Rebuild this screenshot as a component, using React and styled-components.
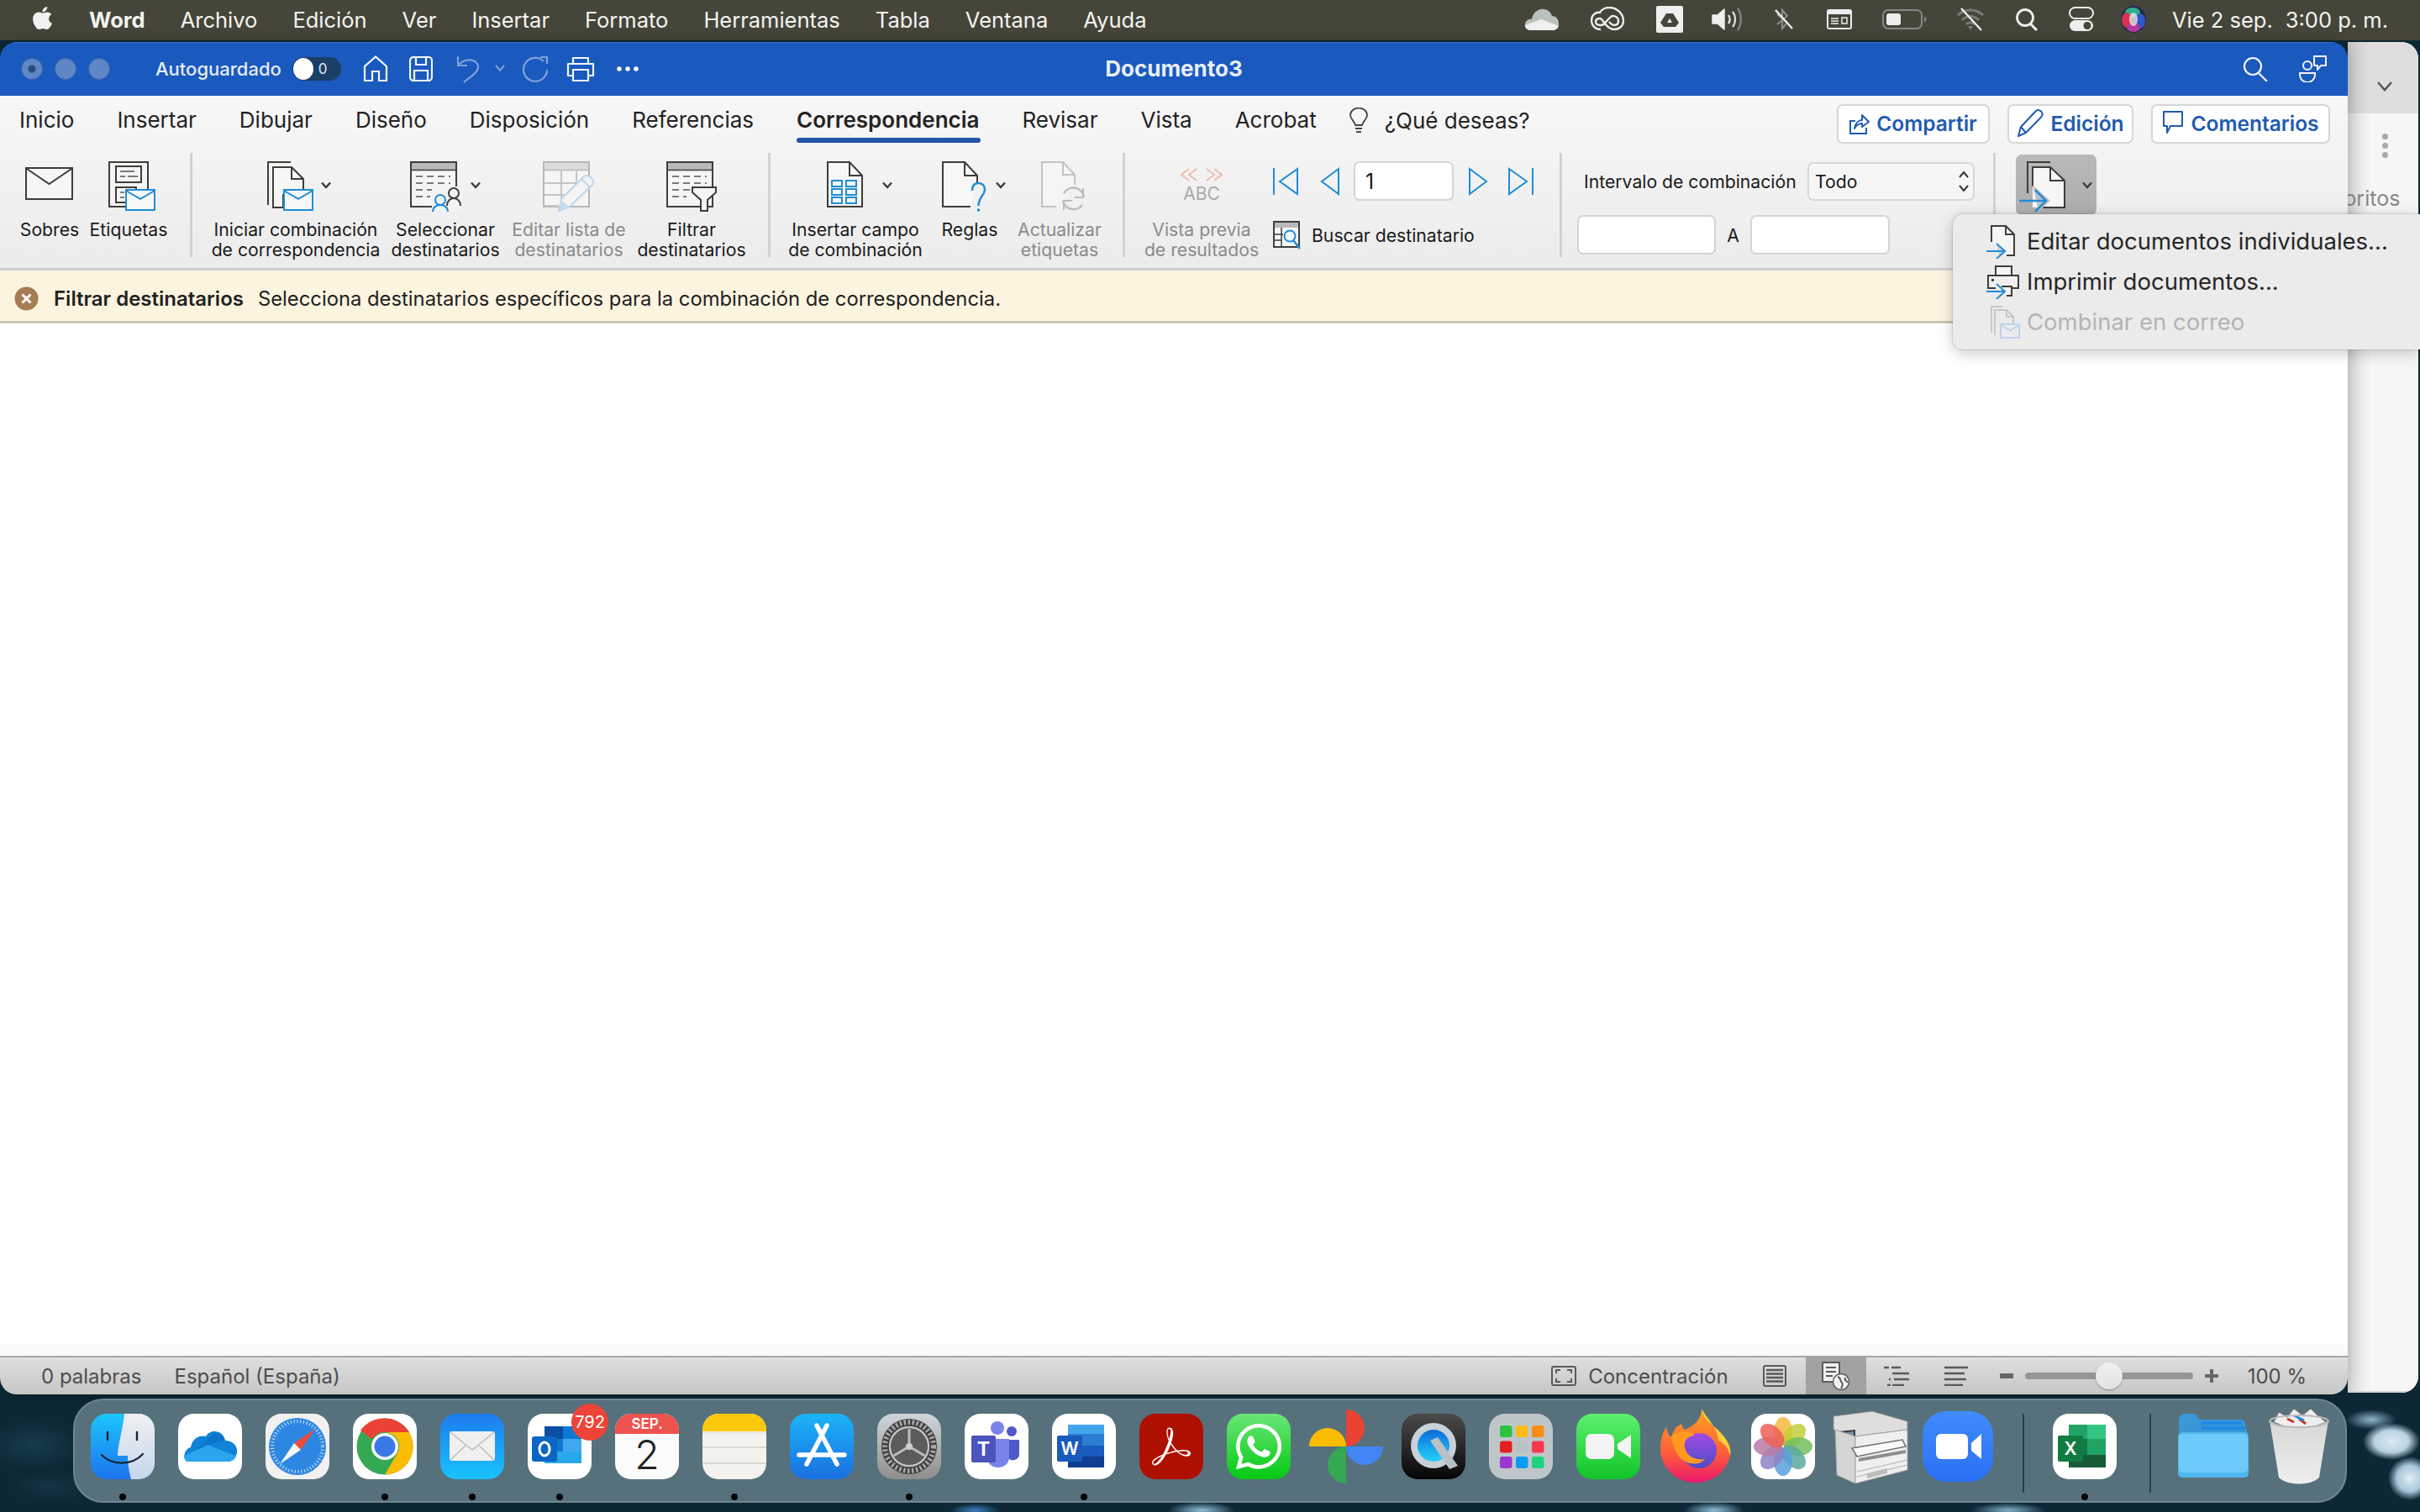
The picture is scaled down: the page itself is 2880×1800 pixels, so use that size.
import styled, { createGlobalStyle } from 'styled-components';
import { FaApple, FaWhatsapp } from 'react-icons/fa';
import { SiAdobeacrobatreader } from 'react-icons/si';

const DARK = '#3f3d38';
const BLUE = '#1f8dd6';
const GREY = '#b9b9b9';

const MENUS = ['Archivo', 'Edición', 'Ver', 'Insertar', 'Formato', 'Herramientas', 'Tabla', 'Ventana', 'Ayuda'];
const TABS = ['Inicio', 'Insertar', 'Dibujar', 'Diseño', 'Disposición', 'Referencias', 'Correspondencia', 'Revisar', 'Vista', 'Acrobat'];

export default function App() {
  return (
    <Stage>
      <GlobalStyle />
      <MenuBar>
        <AppleSlot><FaApple size={31} color="#f2f2f2" /></AppleSlot>
        <AppName>Word</AppName>
        {MENUS.map(m => <MenuItem key={m}>{m}</MenuItem>)}
        <StatusIcons>
          <Slot $w={78}><CloudStatus /></Slot>
          <Slot $w={78}><CreativeCloud /></Slot>
          <Slot $w={70}><DriveBox /></Slot>
          <Slot $w={66}><Speaker /></Slot>
          <Slot $w={70}><Bluetooth /></Slot>
          <Slot $w={62}><KeyViewer /></Slot>
          <Slot $w={94}><Battery /></Slot>
          <Slot $w={62}><Wifi /></Slot>
          <Slot $w={72}><MenuSearch /></Slot>
          <Slot $w={58}><ControlCenter /></Slot>
          <Slot $w={66}><Siri /></Slot>
          <Clock>Vie 2 sep.</Clock>
          <Clock $ml={15}>3:00 p. m.</Clock>
        </StatusIcons>
      </MenuBar>

      <Desktop>
        <WordWindow>
          <TitleBar>
            <TitleLeft>
              <Lights>
                <Light $dot />
                <Light />
                <Light />
              </Lights>
              <AutoSave>Autoguardado</AutoSave>
              <Toggle><Knob /><ToggleText>0</ToggleText></Toggle>
              <QuickIcons />
            </TitleLeft>
            <DocTitle>Documento3</DocTitle>
            <TitleRight>
              <TitleSearch />
              <PeopleChat />
            </TitleRight>
          </TitleBar>

          <TabRow>
            <Tabs>
              {TABS.map(t => <Tab key={t} $active={t === 'Correspondencia'}>{t}</Tab>)}
              <Bulb />
              <Ask>¿Qué deseas?</Ask>
            </Tabs>
            <TabActions>
              <ActionButton $w={182}><ShareGlyph />Compartir</ActionButton>
              <ActionButton $w={150}><PencilGlyph />Edición</ActionButton>
              <ActionButton $w={213}><CommentGlyph />Comentarios</ActionButton>
            </TabActions>
          </TabRow>

          <Ribbon>
            <Group $w={229} $pl={20}>
              <Item $w={78} label={['Sobres']}><SobresIcon /></Item>
              <Item $w={110} $pad={8} label={['Etiquetas']}><EtiquetasIcon /></Item>
            </Group>
            <Group $w={688} $pl={18}>
              <Item $w={210} $pad={7} label={['Iniciar combinación', 'de correspondencia']}><IniciarIcon /><Caret $ml={9} /></Item>
              <Item $w={146} label={['Seleccionar', 'destinatarios']}><SeleccionarIcon /><Caret $ml={10} /></Item>
              <Item $w={148} $off label={['Editar lista de', 'destinatarios']}><EditarIcon /></Item>
              <Item $w={144} label={['Filtrar', 'destinatarios']}><FiltrarIcon /></Item>
            </Group>
            <Group $w={422} $pl={11}>
              <Item $w={180} $pad={10} label={['Insertar campo', 'de combinación']}><InsertarIcon /><Caret $ml={22} /></Item>
              <Item $w={92} $pad={10} label={['Reglas']}><ReglasIcon /><Caret $ml={10} /></Item>
              <Item $w={122} $pad={10} $off label={['Actualizar', 'etiquetas']}><ActualizarIcon /></Item>
            </Group>
            <Group $w={520} $pl={16}>
              <Item $w={150} $off label={['Vista previa', 'de resultados']}>
                <PreviewStack>
                  <PreviewArrows />
                  <PreviewAbc>ABC</PreviewAbc>
                </PreviewStack>
              </Item>
              <NavBlock>
                <NavRow>
                  <NavArrow kind="first" />
                  <NavArrow kind="prev" />
                  <RecordInput readOnly value="1" />
                  <NavArrow kind="next" />
                  <NavArrow kind="last" />
                </NavRow>
                <FindRow>
                  <FindIcon />
                  <FindLabel>Buscar destinatario</FindLabel>
                </FindRow>
              </NavBlock>
            </Group>
            <Group $w={516} $pl={18}>
              <RangeBlock>
                <RangeRow>
                  <RangeLabel>Intervalo de combinación</RangeLabel>
                  <RangeSelect>
                    Todo
                    <UpDown />
                  </RangeSelect>
                </RangeRow>
                <RangeRow>
                  <RangeInput readOnly value="" $w={165} />
                  <RangeTo>A</RangeTo>
                  <RangeInput readOnly value="" $w={166} />
                </RangeRow>
              </RangeBlock>
            </Group>
            <MergeButton>
              <MergeIcon />
              <Caret $ml={20} />
            </MergeButton>
          </Ribbon>

          <Notice>
            <NoticeIcon />
            <NoticeTitle>Filtrar destinatarios</NoticeTitle>
            <NoticeText>Selecciona destinatarios específicos para la combinación de correspondencia.</NoticeText>
          </Notice>

          <Page />

          <StatusBar>
            <StatusText>0 palabras</StatusText>
            <StatusText $ml={39}>Español (España)</StatusText>
            <StatusRight>
              <FocusIcon />
              <StatusText $ml={14}>Concentración</StatusText>
              <ViewLines $ml={41} kind="print" />
              <WebCell><WebIcon /></WebCell>
              <ViewLines $ml={21} kind="outline" />
              <ViewLines $ml={42} kind="draft" />
              <ZoomSign $ml={38}>
                <svg width="16" height="6"><rect width="16" height="6" fill="#666" /></svg>
              </ZoomSign>
              <Slider><SliderKnob /></Slider>
              <ZoomSign $ml={14}>
                <svg width="16" height="16"><path d="M0 8H16M8 0V16" stroke="#666" strokeWidth="4" /></svg>
              </ZoomSign>
              <StatusText $ml={35}>100 %</StatusText>
            </StatusRight>
          </StatusBar>
        </WordWindow>

        <SideWindow>
          <SideTop><SideChevron /></SideTop>
          <SideBody>
            <SideDots><i /><i /><i /></SideDots>
            <SideLabel>Favoritos</SideLabel>
          </SideBody>
        </SideWindow>
      </Desktop>

      <Dock>
        <DockSlot $on><Finder /></DockSlot>
        <DockSlot><OneDrive /></DockSlot>
        <DockSlot><Safari /></DockSlot>
        <DockSlot $on><Chrome /></DockSlot>
        <DockSlot $on><Mail /></DockSlot>
        <DockSlot $on><Outlook /><Badge>792</Badge></DockSlot>
        <DockSlot><Calendar /></DockSlot>
        <DockSlot $on><Notes /></DockSlot>
        <DockSlot><AppStore /></DockSlot>
        <DockSlot $on><SystemPrefs /></DockSlot>
        <DockSlot><Teams /></DockSlot>
        <DockSlot $on><WordApp /></DockSlot>
        <DockSlot><Acrobat /></DockSlot>
        <DockSlot><WhatsApp /></DockSlot>
        <DockSlot><GooglePhotos /></DockSlot>
        <DockSlot><QuickTime /></DockSlot>
        <DockSlot><Launchpad /></DockSlot>
        <DockSlot><FaceTime /></DockSlot>
        <DockSlot><Firefox /></DockSlot>
        <DockSlot><Photos /></DockSlot>
        <DockSlot><Printer /></DockSlot>
        <DockSlot><ZoomApp /></DockSlot>
        <DockSep $l={25} $r={20} />
        <DockSlot $on><ExcelApp /></DockSlot>
        <DockSep $l={25} $r={22} />
        <DockSlot><FolderStack /></DockSlot>
        <DockSlot $ml={-2}><Trash /></DockSlot>
      </Dock>

      <Popup>
        <PopupRow><PopEditIcon /><span>Editar documentos individuales...</span></PopupRow>
        <PopupRow><PopPrintIcon /><span>Imprimir documentos...</span></PopupRow>
        <PopupRow $off><PopMailIcon /><span>Combinar en correo</span></PopupRow>
      </Popup>
    </Stage>
  );
}

function Item({ $w, $pad, $off, label, children }) {
  return (
    <RibbonItem $w={$w} $off={$off}>
      <IconSlot $pad={$pad}>{children}</IconSlot>
      {label.map(l => <span key={l}>{l}</span>)}
    </RibbonItem>
  );
}

function Caret({ $ml }) {
  return (
    <CaretSvg $ml={$ml} width="12" height="9" viewBox="0 0 12 9">
      <path d="M1 1.5L6 7l5-5.5" fill="none" stroke="#3b3b3b" strokeWidth="2.4" />
    </CaretSvg>
  );
}

function Env({ x, y, w = 35, h = 25, color = BLUE, fill = '#f7f7f7' }) {
  return (
    <g>
      <rect x={x + 1} y={y + 1} width={w - 2} height={h - 2} fill={fill} stroke={color} strokeWidth="2" />
      <path d={`M${x + 1} ${y + 2}L${x + w / 2} ${y + h * 0.46}L${x + w - 1} ${y + 2}`} fill="none" stroke={color} strokeWidth="2" />
    </g>
  );
}

function TableBase({ stroke = DARK, header = GREY }) {
  return (
    <g>
      <rect x="1" y="1" width="54" height="53" fill="#f5f5f5" stroke={stroke} strokeWidth="2" />
      <rect x="2" y="2" width="52" height="8" fill={header} />
      <path d="M2 10.5H54" stroke={stroke} strokeWidth="1.5" />
    </g>
  );
}

function Dashes() {
  return (
    <path d="M7 18H48M7 26H48M7 34H30M7 42H24" stroke="#7b7b76" strokeWidth="2" strokeDasharray="8 5" fill="none" />
  );
}

function SobresIcon() {
  return (
    <svg width="58" height="60" viewBox="0 0 58 60">
      <rect x="1" y="8" width="55" height="37" fill="#f6f6f6" stroke={DARK} strokeWidth="2" />
      <path d="M2 9L28.5 27L55 9" fill="none" stroke={DARK} strokeWidth="2" />
    </svg>
  );
}

function EtiquetasIcon() {
  return (
    <svg width="56" height="60" viewBox="0 0 56 60">
      <rect x="1" y="1" width="46" height="53" fill="#f5f5f5" stroke={DARK} strokeWidth="2" />
      <rect x="9" y="6" width="30" height="19" fill="none" stroke={DARK} strokeWidth="2" />
      <path d="M14 12H31M14 18H20M23 18H35" stroke="#7b7b76" strokeWidth="2" />
      <rect x="9" y="31" width="24" height="18" fill="none" stroke={DARK} strokeWidth="2" />
      <path d="M14 37H19M14 43H19" stroke="#7b7b76" strokeWidth="2" />
      <Env x={20} y={33} w={36} h={26} />
    </svg>
  );
}

function IniciarIcon() {
  return (
    <svg width="55" height="60" viewBox="0 0 55 60">
      <path d="M28 1H1V52" fill="none" stroke={DARK} strokeWidth="2" />
      <path d="M7 55V7H29L43 21V40H19V55Z" fill="#f6f6f6" stroke={DARK} strokeWidth="2" />
      <path d="M29 7V21H43" fill="none" stroke={DARK} strokeWidth="2" />
      <Env x={19} y={33} w={36} h={26} />
    </svg>
  );
}

function SeleccionarIcon() {
  return (
    <svg width="62" height="60" viewBox="0 0 62 60">
      <TableBase />
      <Dashes />
      <rect x="26" y="30" width="36" height="30" fill="#f3f3f3" />
      <circle cx="52" cy="38" r="6" fill="#f3f3f3" stroke={DARK} strokeWidth="2" />
      <path d="M44 53c0-6 4-9 8-9s8 3 8 9" fill="none" stroke={DARK} strokeWidth="2" />
      <circle cx="36" cy="46" r="6" fill="#f3f3f3" stroke={BLUE} strokeWidth="2" />
      <path d="M27 60c0-5 4-8 9-8s9 3 9 8" fill="none" stroke={BLUE} strokeWidth="2" />
    </svg>
  );
}

function EditarIcon() {
  return (
    <svg width="62" height="60" viewBox="0 0 62 60">
      <TableBase stroke="#b7b7b7" header="#dcdcdc" />
      <path d="M2 26H40M2 40H28M2 53H18M22 10V54M40 10V30" stroke="#c4c4c4" strokeWidth="2" fill="none" />
      <path d="M22 45L49 18C52 16 55 17 58 20C60 23 61 25 59 28L32 54L19 59Z" fill="#f4f4f4" stroke="#bcd5ec" strokeWidth="2" />
      <path d="M23 47L31 54L19 59Z" fill="#c7dcf0" />
      <path d="M46 21L56 31" stroke="#bcd5ec" strokeWidth="2" />
    </svg>
  );
}

function FiltrarIcon() {
  return (
    <svg width="60" height="60" viewBox="0 0 60 60">
      <TableBase />
      <Dashes />
      <path d="M31 31H59V37L49 46V59H41V46L31 37Z" fill="#f5f5f5" stroke={DARK} strokeWidth="2" />
    </svg>
  );
}

function InsertarIcon() {
  return (
    <svg width="44" height="60" viewBox="0 0 44 60">
      <path d="M1 1H27L42 17V54H1Z" fill="#f7f7f7" stroke={DARK} strokeWidth="2" />
      <path d="M27 1V17H42" fill="none" stroke={DARK} strokeWidth="2" />
      <path d="M6 23h12v7H6zM23 23h12v7H23zM6 33h12v7H6zM23 33h12v7H23zM6 43h12v7H6zM23 43h12v7H23z" fill="none" stroke={BLUE} strokeWidth="2" />
    </svg>
  );
}

function ReglasIcon() {
  return (
    <svg width="54" height="60" viewBox="0 0 54 60">
      <path d="M34 54H1V1H27L42 17V26" fill="#f7f7f7" stroke={DARK} strokeWidth="2" />
      <path d="M27 1V17H42" fill="none" stroke={DARK} strokeWidth="2" />
      <path d="M36 35c0-6 3-9 7.500-9s7.500 3 7.500 8c0 6-7 8-7.500 19" fill="none" stroke={BLUE} strokeWidth="2.500" />
      <circle cx="43.500" cy="58" r="1.800" fill={BLUE} />
    </svg>
  );
}

function ActualizarIcon() {
  return (
    <svg width="54" height="60" viewBox="0 0 54 60">
      <path d="M18 54H1V1H26L40 16V28" fill="#f5f5f5" stroke="#c2c2c2" strokeWidth="2" />
      <path d="M26 1V16H40" fill="none" stroke="#c2c2c2" strokeWidth="2" />
      <path d="M27 38a13 13 0 0 1 24 4M49 52a13 13 0 0 1-23-5" fill="none" stroke="#bcbcbc" strokeWidth="2.500" />
      <path d="M50 32V43H40M27 58V47H37" fill="none" stroke="#bcbcbc" strokeWidth="2" />
    </svg>
  );
}

function PreviewArrows() {
  return (
    <svg width="52" height="16" viewBox="0 0 52 16">
      <path d="M11 1L2 8L11 15M20 1L11 8L20 15M32 1L41 8L32 15M41 1L50 8L41 15" fill="none" stroke="#efbcae" strokeWidth="2" />
    </svg>
  );
}

function NavArrow({ kind }) {
  if (kind === 'first' || kind === 'last') {
    return (
      <NavSvg width="30" height="34" viewBox="0 0 30 34" $flip={kind === 'last'} $ml={kind === 'first' ? 0 : 24}>
        <path d="M1 1V33M29 2L8 17L29 32Z" fill="none" stroke={BLUE} strokeWidth="2" />
      </NavSvg>
    );
  }
  return (
    <NavSvg width="24" height="34" viewBox="0 0 24 34" $flip={kind === 'next'} $ml={kind === 'prev' ? 26 : 17}>
      <path d="M22 2L2 17L22 32Z" fill="none" stroke={BLUE} strokeWidth="2" />
    </NavSvg>
  );
}

function FindIcon() {
  return (
    <svg width="34" height="34" viewBox="0 0 34 34">
      <rect x="1" y="1" width="30" height="30" fill="#f5f5f5" stroke={DARK} strokeWidth="2" />
      <rect x="2" y="2" width="28" height="6" fill={GREY} />
      <path d="M2 16H12M2 23H10M10 8V30" stroke={DARK} strokeWidth="1.500" />
      <circle cx="20" cy="18" r="6.500" fill="#f5f5f5" stroke={BLUE} strokeWidth="2" />
      <path d="M24 23L32 33" stroke={BLUE} strokeWidth="2.500" />
    </svg>
  );
}

function UpDown() {
  return (
    <UpDownSvg width="12" height="26" viewBox="0 0 12 26">
      <path d="M1 8L6 2L11 8M1 18L6 24L11 18" fill="none" stroke="#333" strokeWidth="2" />
    </UpDownSvg>
  );
}

function MergeIcon() {
  return (
    <svg width="56" height="60" viewBox="0 0 56 60">
      <path d="M38 1H11V38" fill="none" stroke={DARK} strokeWidth="2" />
      <path d="M17 7H38L55 23V55H17Z" fill="#f6f6f6" />
      <path d="M17 30V7H38L55 23V55H28M38 7V23H55" fill="none" stroke={DARK} strokeWidth="2" />
      <path d="M17 28L38 47L24 60Z" fill="#c4c4c4" />
      <path d="M1 47H32M20 34L33 47L20 60" fill="none" stroke={BLUE} strokeWidth="2.500" />
    </svg>
  );
}

function PopEditIcon() {
  return (
    <svg width="40" height="42" viewBox="0 0 40 42">
      <path d="M6 22V3H23L33 13V38H24" fill="#f4f4f4" stroke={DARK} strokeWidth="2" />
      <path d="M23 3V13H33" fill="none" stroke={DARK} strokeWidth="2" />
      <path d="M12 23L24 33L15 41Z" fill="#d4d4d4" />
      <path d="M0 33H22M12 24L22 33L12 42" fill="none" stroke={BLUE} strokeWidth="2" />
    </svg>
  );
}

function PopPrintIcon() {
  return (
    <svg width="40" height="42" viewBox="0 0 40 42">
      <path d="M11 14V3H30V14" fill="#f4f4f4" stroke={DARK} strokeWidth="2" />
      <path d="M11 29H2V14H38V29H30" fill="#f0f0f0" stroke={DARK} strokeWidth="2" />
      <rect x="6" y="18" width="3" height="3" fill={DARK} />
      <path d="M18 27H30V38H24" fill="#f4f4f4" stroke={DARK} strokeWidth="2" />
      <path d="M0 33H22M12 24L22 33L12 42" fill="none" stroke={BLUE} strokeWidth="2" />
    </svg>
  );
}

function PopMailIcon() {
  return (
    <svg width="40" height="42" viewBox="0 0 40 42">
      <path d="M19 3H6V34" fill="none" stroke="#bdbdbd" strokeWidth="1.500" />
      <path d="M10 37V7H24L32 15V24" fill="none" stroke="#bdbdbd" strokeWidth="1.500" />
      <path d="M24 7V15H32" fill="none" stroke="#bdbdbd" strokeWidth="1.500" />
      <Env x={16} y={23} w={24} h={18} color="#bdd3ea" fill="#ececec" />
    </svg>
  );
}

function QuickIcons() {
  const w = '#f4f7fc';
  const dim = '#7fa2d9';
  return (
    <QuickRow>
      <svg width="30" height="32" viewBox="0 0 30 32">
        <path d="M2 30V13L15 1.500L28 13V30H19V19H11V30Z" fill="none" stroke={w} strokeWidth="2.200" />
      </svg>
      <svg width="28" height="30" viewBox="0 0 28 30">
        <rect x="1" y="1" width="26" height="28" rx="4" fill="none" stroke={w} strokeWidth="2.200" />
        <path d="M8 1V10H20V1M6 29V17H22V29" fill="none" stroke={w} strokeWidth="2.200" />
      </svg>
      <svg width="28" height="34" viewBox="0 0 28 34">
        <path d="M2 2V13H13M2 13C12 2 27 6 26 16C25 23 14 28 9 33" fill="none" stroke={dim} strokeWidth="2.200" />
      </svg>
      <svg width="12" height="9" viewBox="0 0 12 9">
        <path d="M1 1L6 7L11 1" fill="none" stroke={dim} strokeWidth="2" />
      </svg>
      <svg width="32" height="34" viewBox="0 0 32 34">
        <path d="M26 8A14 14 0 1 0 30 18M22 3H30V11" fill="none" stroke={dim} strokeWidth="2.200" />
      </svg>
      <svg width="34" height="30" viewBox="0 0 34 30">
        <path d="M8 9V2H26V9M8 23H2V9H32V23H26M8 16H26V29H8Z" fill="none" stroke={w} strokeWidth="2.200" strokeLinejoin="round" />
      </svg>
      <svg width="26" height="6" viewBox="0 0 26 6">
        <circle cx="3" cy="3" r="2.800" fill={w} /><circle cx="13" cy="3" r="2.800" fill={w} /><circle cx="23" cy="3" r="2.800" fill={w} />
      </svg>
    </QuickRow>
  );
}

function TitleSearch() {
  return (
    <svg width="30" height="30" viewBox="0 0 30 30">
      <circle cx="12" cy="12" r="10" fill="none" stroke="#f4f7fc" strokeWidth="2.200" />
      <path d="M19 20L29 30" stroke="#f4f7fc" strokeWidth="2.200" />
    </svg>
  );
}

function PeopleChat() {
  return (
    <svg width="34" height="32" viewBox="0 0 34 32">
      <circle cx="10" cy="12" r="5" fill="none" stroke="#f4f7fc" strokeWidth="2" />
      <path d="M1 21H19V23A9 9 0 0 1 1 23Z" fill="none" stroke="#f4f7fc" strokeWidth="2" />
      <path d="M18 1H32V12H26L22 17V12H18Z" fill="none" stroke="#f4f7fc" strokeWidth="2" strokeLinejoin="round" />
    </svg>
  );
}

function Bulb() {
  return (
    <BulbSvg width="24" height="30" viewBox="0 0 24 30">
      <path d="M8 21C7 16 2 14 2 9A10 8.500 0 0 1 22 9C22 14 17 16 16 21Z" fill="none" stroke="#444" strokeWidth="1.800" />
      <path d="M8 25H16M9 29H15" stroke="#444" strokeWidth="2" />
    </BulbSvg>
  );
}

function ShareGlyph() {
  return (
    <svg width="24" height="26" viewBox="0 0 24 26">
      <path d="M7 10H1V25H20V18" fill="none" stroke="#1f5bb0" strokeWidth="2" />
      <path d="M6 19C7 12 11 9 15 9V3L23 11L15 17V13C11 13 8 15 6 19Z" fill="none" stroke="#1f5bb0" strokeWidth="2" strokeLinejoin="round" />
    </svg>
  );
}

function PencilGlyph() {
  return (
    <svg width="32" height="34" viewBox="0 0 32 34">
      <path d="M2 32L5 21L23 2C25 0.500 28 1 29.500 3C31 5 31 7 29.500 9L11 28Z M5 21L11 28" fill="none" stroke="#1f5bb0" strokeWidth="2" strokeLinejoin="round" />
    </svg>
  );
}

function CommentGlyph() {
  return (
    <svg width="26" height="30" viewBox="0 0 26 30">
      <path d="M2 1H24V18H10L6 26V18H2Z" fill="none" stroke="#1f5bb0" strokeWidth="2" strokeLinejoin="round" />
    </svg>
  );
}

function NoticeIcon() {
  return (
    <svg width="29" height="29" viewBox="0 0 29 29">
      <circle cx="14.500" cy="14.500" r="14" fill="#a67c52" />
      <path d="M9.500 9.500L19.500 19.500M19.500 9.500L9.500 19.500" stroke="#fff" strokeWidth="3" />
    </svg>
  );
}

function FocusIcon() {
  return (
    <svg width="30" height="24" viewBox="0 0 30 24">
      <rect x="1" y="1" width="28" height="22" rx="2" fill="none" stroke="#5a5a5a" strokeWidth="2" />
      <path d="M6 9V5H11M19 5H24V9M24 15V19H19M11 19H6V15" fill="none" stroke="#5a5a5a" strokeWidth="2" />
    </svg>
  );
}

function ViewLines({ $ml, kind }) {
  if (kind === 'print') {
    return (
      <ViewSvg $ml={$ml} width="28" height="26" viewBox="0 0 28 26">
        <rect x="1" y="1" width="26" height="24" rx="2" fill="none" stroke="#5a5a5a" strokeWidth="2" />
        <path d="M4 6H24M4 10.500H24M4 15H24M4 19.500H24" stroke="#5a5a5a" strokeWidth="2.500" />
      </ViewSvg>
    );
  }
  if (kind === 'outline') {
    return (
      <ViewSvg $ml={$ml} width="30" height="24" viewBox="0 0 30 24">
        <path d="M0 2H6M9 2H20M10 9H30M6 16H8M12 16H30M4 23H8M10 23H24" stroke="#5a5a5a" strokeWidth="2.500" />
      </ViewSvg>
    );
  }
  return (
    <ViewSvg $ml={$ml} width="28" height="24" viewBox="0 0 28 24">
      <path d="M0 2H28M0 9H24M0 16H26M0 23H22" stroke="#5a5a5a" strokeWidth="2.500" />
    </ViewSvg>
  );
}

function WebIcon() {
  return (
    <svg width="34" height="34" viewBox="0 0 34 34">
      <path d="M1 1H21V24H1Z" fill="#eee" stroke="#5a5a5a" strokeWidth="2" />
      <path d="M5 7H17M5 12H17M5 17H13" stroke="#5a5a5a" strokeWidth="2" />
      <circle cx="23" cy="24" r="9.500" fill="#f2f2f2" stroke="#5a5a5a" strokeWidth="1.500" />
      <path d="M19 18C24 20 21 23 24 25C26 27 24 30 23 32M28 19C26 22 30 23 31 25" fill="none" stroke="#5a5a5a" strokeWidth="2" />
    </svg>
  );
}

function SideChevron() {
  return (
    <svg width="20" height="13" viewBox="0 0 20 13">
      <path d="M2 2L10 11L18 2" fill="none" stroke="#555" strokeWidth="2.500" />
    </svg>
  );
}

/* menu bar status items */

function CloudStatus() {
  return (
    <svg width="42" height="28" viewBox="0 0 42 28">
      <path d="M8 27C2 27 0 23 1 19C2 15 6 13 9 14C10 6 17 1 24 2C30 3 32 7 33 10C38 10 41 14 41 19C41 24 38 27 33 27Z" fill="#b9c3bc" />
      <path d="M1 21L20 14L41 22C40 25 37 27 33 27H8C4 27 2 25 1 21Z" fill="#f0f0f0" />
    </svg>
  );
}

function CreativeCloud() {
  return (
    <svg width="40" height="30" viewBox="0 0 40 30">
      <path d="M12 27C6 27 1 23 1 16C1 10 6 6 11 7C13 3 18 1 22 1C31 1 39 8 39 17C39 23 34 27 28 27C23 27 20 24 17 20L13 15C11 13 6 14 6 18C6 21 9 22 12 22C15 22 17 20 19 17L24 12C26 10 33 11 33 17C33 20 31 22 28 22C25 22 24 20 22 18" fill="none" stroke="#eee" strokeWidth="2.400" />
    </svg>
  );
}

function DriveBox() {
  return (
    <svg width="32" height="32" viewBox="0 0 32 32">
      <rect width="32" height="32" rx="2" fill="#f0f0f0" />
      <path d="M12 9H20L27 20L23 25H9L5 20Z" fill="#45453a" />
      <path d="M16 15L19 20H13Z" fill="#f0f0f0" />
    </svg>
  );
}

function Speaker() {
  return (
    <svg width="36" height="30" viewBox="0 0 36 30">
      <path d="M1 10H7L15 3V27L7 20H1Z" fill="#eee" stroke="#eee" strokeWidth="1.500" strokeLinejoin="round" />
      <path d="M20 10C22 13 22 17 20 20" fill="none" stroke="#eee" strokeWidth="2.200" />
      <path d="M25 6C29 11 29 19 25 24" fill="none" stroke="#ddd" strokeWidth="2.200" />
      <path d="M31 2C36 9 36 21 31 28" fill="none" stroke="#888" strokeWidth="2.200" />
    </svg>
  );
}

function Bluetooth() {
  return (
    <svg width="22" height="28" viewBox="0 0 22 28">
      <path d="M3 8L15 18L9 25V3L15 10L3 20" fill="none" stroke="#8f8f8a" strokeWidth="2" />
      <path d="M1 3L21 25" stroke="#eee" strokeWidth="2.400" />
    </svg>
  );
}

function KeyViewer() {
  return (
    <svg width="30" height="24" viewBox="0 0 30 24">
      <rect width="30" height="24" rx="3" fill="#eee" />
      <rect x="2" y="6" width="26" height="16" fill="#45453a" />
      <path d="M5 11H14M5 14H14M5 17H14" stroke="#eee" strokeWidth="1.600" />
      <path d="M18 10h6v7h-6z" fill="none" stroke="#eee" strokeWidth="1.500" />
    </svg>
  );
}

function Battery() {
  return (
    <svg width="54" height="24" viewBox="0 0 54 24">
      <rect x="1" y="1" width="46" height="22" rx="6" fill="none" stroke="#888" strokeWidth="2" />
      <rect x="5" y="5" width="17" height="14" rx="3" fill="#eee" />
      <path d="M50 8L53 12L50 16Z" fill="#888" />
    </svg>
  );
}

function Wifi() {
  return (
    <svg width="34" height="28" viewBox="0 0 34 28">
      <path d="M2 9C11 1 23 1 32 9M7 15C13 9 21 9 27 15M12 20C15 17 19 17 22 20" fill="none" stroke="#7b7b73" strokeWidth="3" />
      <path d="M17 27L14 22H20Z" fill="#7b7b73" />
      <path d="M6 1L30 27" stroke="#eee" strokeWidth="2.400" />
    </svg>
  );
}

function MenuSearch() {
  return (
    <svg width="28" height="28" viewBox="0 0 28 28">
      <circle cx="12" cy="12" r="9.500" fill="none" stroke="#f0f0f0" strokeWidth="2.800" />
      <path d="M18 19L26 27" stroke="#f0f0f0" strokeWidth="3" />
    </svg>
  );
}

function ControlCenter() {
  return (
    <svg width="30" height="30" viewBox="0 0 30 30">
      <rect x="1" y="1" width="28" height="13" rx="6.500" fill="none" stroke="#eee" strokeWidth="2" />
      <rect x="3" y="3" width="11" height="9" rx="4.500" fill="#45453a" />
      <rect x="1" y="16" width="28" height="13" rx="6.500" fill="#eee" />
      <circle cx="22" cy="22.500" r="4.500" fill="#45453a" />
    </svg>
  );
}

function Siri() {
  return (
    <svg width="30" height="32" viewBox="0 0 30 32">
      <ellipse cx="15" cy="16" rx="15" ry="16" fill="#242a52" />
      <ellipse cx="14" cy="8" rx="9" ry="6" fill="#2fb08a" />
      <ellipse cx="7" cy="17" rx="6" ry="9" fill="#d8324f" />
      <ellipse cx="23" cy="18" rx="6" ry="9" fill="#2f58c8" />
      <ellipse cx="15" cy="26" rx="8" ry="5" fill="#b23a9a" />
      <ellipse cx="15" cy="16" rx="5" ry="8" fill="#f2e2ea" opacity=".8" />
    </svg>
  );
}

/* dock icons */

function Tile({ fill = '#fff', children }) {
  return (
    <svg width="78" height="78" viewBox="0 0 78 78">
      <rect x="1" y="0" width="76" height="78" rx="19" fill={fill} />
      {children}
    </svg>
  );
}

function Finder() {
  return (
    <svg width="78" height="78" viewBox="0 0 78 78">
      <defs>
        <linearGradient id="finL" x1="0" y1="0" x2="0" y2="1">
          <stop offset="0" stopColor="#1cc6fb" />
          <stop offset="1" stopColor="#1d72ef" />
        </linearGradient>
        <linearGradient id="finR" x1="0" y1="0" x2="0" y2="1">
          <stop offset="0" stopColor="#eef0f2" />
          <stop offset="1" stopColor="#c7d6ec" />
        </linearGradient>
      </defs>
      <rect x="1" width="76" height="78" rx="19" fill="url(#finL)" />
      <path d="M41 0H58A19 19 0 0 1 77 19V59A19 19 0 0 1 58 78H49C46 66 45 58 45 50H33C33 38 39 20 41 0Z" fill="url(#finR)" />
      <path d="M21 22V31M56 22V31" stroke="#1b2430" strokeWidth="2.400" strokeLinecap="round" />
      <path d="M14 49C26 62 50 62 63 48" fill="none" stroke="#1b2430" strokeWidth="2.200" strokeLinecap="round" />
    </svg>
  );
}

function OneDrive() {
  return (
    <Tile>
      <path d="M13 57C6 56 7 42 16 40C18 28 28 25 34 27C40 17 55 20 57 32C67 32 74 40 70 50C68 56 63 57 60 57Z" fill="#0f83d8" />
      <path d="M8 50L36 37L70 50C68 56 63 57 60 57H13C10 57 8 54 8 50Z" fill="#2ba5ec" />
      <path d="M22 44L42 24C48 22 55 25 57 32L36 37Z" fill="#0b6fc4" opacity=".7" />
    </Tile>
  );
}

function Safari() {
  return (
    <Tile fill="#f1f1f1">
      <circle cx="39" cy="39" r="34" fill="#2d87e2" />
      <circle cx="39" cy="39" r="30" fill="none" stroke="#d6e9fa" strokeWidth="4" strokeDasharray="1 2.800" />
      <path d="M60 18L35 35L43 43Z" fill="#ef4b3c" />
      <path d="M18 60L35 35L43 43Z" fill="#f5f5f5" />
    </Tile>
  );
}

function Chrome() {
  return (
    <Tile>
      <circle cx="39" cy="39" r="33.500" fill="#34a853" />
      <path d="M39 5.500A33.500 33.500 0 0 1 68 22H39A17 17 0 0 0 24 30.500L10 20A33.500 33.500 0 0 1 39 5.500Z" fill="#ea4335" />
      <path d="M68 22A33.500 33.500 0 0 1 39 72.500L54 47A17 17 0 0 0 39 22Z" fill="#fbbc04" />
      <circle cx="39" cy="39" r="16" fill="#fff" />
      <circle cx="39" cy="39" r="12.500" fill="#3b78e7" />
    </Tile>
  );
}

function Mail() {
  return (
    <svg width="78" height="78" viewBox="0 0 78 78">
      <defs>
        <linearGradient id="mailG" x1="0" y1="0" x2="0" y2="1">
          <stop offset="0" stopColor="#1c7cf0" />
          <stop offset="1" stopColor="#19c3fc" />
        </linearGradient>
      </defs>
      <rect x="1" width="76" height="78" rx="19" fill="url(#mailG)" />
      <rect x="12" y="21" width="54" height="35" rx="3" fill="#f0f0f0" />
      <path d="M13 22L39 43L65 22M13 55L32 37M65 55L46 37" fill="none" stroke="#bdbdbd" strokeWidth="1.500" />
    </svg>
  );
}

function Outlook() {
  return (
    <Tile>
      <rect x="21" y="15" width="44" height="44" fill="#0f78d4" />
      <rect x="21" y="15" width="22" height="15" fill="#0a4fa3" />
      <rect x="43" y="30" width="22" height="15" fill="#40a9ee" />
      <rect x="21" y="45" width="44" height="14" fill="#28a8ea" />
      <rect x="6" y="27" width="30" height="30" rx="3" fill="#0a66c2" />
      <ellipse cx="21" cy="42" rx="6" ry="8" fill="none" stroke="#fff" strokeWidth="3" />
    </Tile>
  );
}

function Calendar() {
  return (
    <svg width="78" height="78" viewBox="0 0 78 78">
      <rect x="1" width="76" height="78" rx="19" fill="#fbfbfb" />
      <path d="M1 24V19A19 19 0 0 1 20 0H58A19 19 0 0 1 77 19V24Z" fill="#ef5350" />
      <text x="39" y="18" textAnchor="middle" fontFamily="Inter, sans-serif" fontSize="17" fontWeight="600" fill="#fff">SEP.</text>
      <text x="39" y="66" textAnchor="middle" fontFamily="Inter, sans-serif" fontSize="48" fontWeight="300" fill="#222">2</text>
    </svg>
  );
}

function Notes() {
  return (
    <svg width="78" height="78" viewBox="0 0 78 78">
      <rect x="1" width="76" height="78" rx="19" fill="#f3f2ec" />
      <path d="M1 21V19A19 19 0 0 1 20 0H58A19 19 0 0 1 77 19V21Z" fill="#fcc80c" />
      <path d="M1 23H77" stroke="#cfcfcf" strokeWidth="2" strokeDasharray="1 1.500" />
      <path d="M1 40H77M1 59H77" stroke="#d8d8d4" strokeWidth="2" />
    </svg>
  );
}

function AppStore() {
  return (
    <svg width="78" height="78" viewBox="0 0 78 78">
      <defs>
        <linearGradient id="asG" x1="0" y1="0" x2="0" y2="1">
          <stop offset="0" stopColor="#1cb4f8" />
          <stop offset="1" stopColor="#1a6fe0" />
        </linearGradient>
      </defs>
      <rect x="1" width="76" height="78" rx="19" fill="url(#asG)" />
      <path d="M33 14L57 60M45 14L21 60M12 49H66" stroke="#fff" strokeWidth="5.500" strokeLinecap="round" />
    </svg>
  );
}

function SystemPrefs() {
  return (
    <svg width="78" height="78" viewBox="0 0 78 78">
      <defs>
        <linearGradient id="spG" x1="0" y1="0" x2="0" y2="1">
          <stop offset="0" stopColor="#cfd6d9" />
          <stop offset="1" stopColor="#8d8d8d" />
        </linearGradient>
      </defs>
      <rect x="1" width="76" height="78" rx="19" fill="url(#spG)" />
      <circle cx="39" cy="39" r="33" fill="#3f3f3f" />
      <circle cx="39" cy="39" r="29" fill="none" stroke="#a8a8a8" strokeWidth="6" strokeDasharray="2.500 2.500" />
      <circle cx="39" cy="39" r="23" fill="none" stroke="#c4c4c4" strokeWidth="2.500" />
      <circle cx="39" cy="39" r="21.500" fill="#5c5c5c" />
      <path d="M39 39V18M39 39L20.500 50M39 39L57.500 50" stroke="#bdbdbd" strokeWidth="3" />
      <circle cx="39" cy="39" r="4" fill="#cfcfcf" />
    </svg>
  );
}

function Teams() {
  return (
    <Tile>
      <circle cx="40" cy="17" r="8" fill="#7b83eb" />
      <circle cx="57" cy="21" r="6" fill="#5059c9" />
      <path d="M50 31H66V48C66 54 60 56 56 55L50 52Z" fill="#5059c9" />
      <path d="M28 30H54V52C54 60 47 64 41 64C34 64 28 60 28 52Z" fill="#7b83eb" />
      <rect x="9" y="26" width="29" height="32" rx="2" fill="#4b53bc" />
      <text x="23.500" y="50" textAnchor="middle" fontFamily="Inter, sans-serif" fontSize="23" fontWeight="700" fill="#fff">T</text>
    </Tile>
  );
}

function WordApp() {
  return (
    <Tile>
      <rect x="20" y="13" width="43" height="11" fill="#41a5ee" />
      <rect x="20" y="24" width="43" height="14" fill="#2b7cd3" />
      <rect x="20" y="38" width="43" height="13" fill="#185abd" />
      <rect x="20" y="51" width="43" height="13" fill="#103f91" />
      <rect x="7" y="26" width="30" height="31" rx="2" fill="#185abd" />
      <text x="22" y="49" textAnchor="middle" fontFamily="Inter, sans-serif" fontSize="21" fontWeight="600" fill="#fff">W</text>
    </Tile>
  );
}

function Acrobat() {
  return <Tile fill="#ae1000"><SiAdobeacrobatreader x="16" y="16" size={46} color="#fff" /></Tile>;
}

function WhatsApp() {
  return (
    <svg width="78" height="78" viewBox="0 0 78 78">
      <defs>
        <linearGradient id="waG" x1="0" y1="0" x2="0" y2="1">
          <stop offset="0" stopColor="#6ae678" />
          <stop offset="1" stopColor="#05c913" />
        </linearGradient>
      </defs>
      <rect x="1" width="76" height="78" rx="19" fill="url(#waG)" />
      <FaWhatsapp x="8" y="8" size={62} color="#fff" />
    </svg>
  );
}

function GooglePhotos() {
  return (
    <WideSvg width="88" height="88" viewBox="0 0 88 88" $top={-5}>
      <path d="M44 0A22 22 0 0 1 44 44Z" fill="#ea4335" />
      <path d="M0 44A22 22 0 0 1 44 44Z" fill="#fbbc04" />
      <path d="M44 44H88A22 22 0 0 1 44 44Z" fill="#4285f4" />
      <path d="M44 44V88A22 22 0 0 1 44 44Z" fill="#34a853" />
    </WideSvg>
  );
}

function QuickTime() {
  return (
    <svg width="78" height="78" viewBox="0 0 78 78">
      <defs>
        <linearGradient id="qtG" x1="0" y1="0" x2="0" y2="1">
          <stop offset="0" stopColor="#4b4b4b" />
          <stop offset="1" stopColor="#060606" />
        </linearGradient>
        <linearGradient id="qtB" x1="0" y1="0" x2="0" y2="1">
          <stop offset="0" stopColor="#0d6bd8" />
          <stop offset="1" stopColor="#23d3fb" />
        </linearGradient>
      </defs>
      <rect x="1" width="76" height="78" rx="19" fill="url(#qtG)" />
      <circle cx="39" cy="38" r="27" fill="#c8d0d8" />
      <circle cx="39" cy="38" r="19" fill="url(#qtB)" />
      <path d="M35 32L58 66L68 62L44 28Z" fill="#b9c0c8" />
    </svg>
  );
}

function Launchpad() {
  const colors = ['#2cc23e', '#fdbb1a', '#fa8c16', '#e31e1e', '#b9c0c6', '#f9384e', '#9c36d0', '#0c9cf5', '#1fd27f'];
  return (
    <Tile fill="#bfc6c9">
      {colors.map((c, i) => (
        <rect key={c} x={14 + (i % 3) * 19} y={14 + Math.floor(i / 3) * 18.500} width="14.500" height="14" rx="3" fill={c} />
      ))}
    </Tile>
  );
}

function FaceTime() {
  return (
    <svg width="78" height="78" viewBox="0 0 78 78">
      <defs>
        <linearGradient id="ftG" x1="0" y1="0" x2="0" y2="1">
          <stop offset="0" stopColor="#5df06f" />
          <stop offset="1" stopColor="#11c428" />
        </linearGradient>
      </defs>
      <rect x="1" width="76" height="78" rx="19" fill="url(#ftG)" />
      <rect x="12" y="24" width="34" height="30" rx="7" fill="#f4f4f4" />
      <path d="M50 36L66 25V53L50 42Z" fill="#f4f4f4" />
    </svg>
  );
}

function Firefox() {
  return (
    <WideSvg width="86" height="88" viewBox="0 0 86 88" $top={-6}>
      <defs>
        <linearGradient id="ffA" x1="0" y1="0" x2="0" y2="1">
          <stop offset="0" stopColor="#ffa41b" />
          <stop offset=".6" stopColor="#ff5d3a" />
          <stop offset="1" stopColor="#e8186e" />
        </linearGradient>
        <linearGradient id="ffB" x1="0" y1="0" x2="0" y2="1">
          <stop offset="0" stopColor="#a24be3" />
          <stop offset="1" stopColor="#4d4bc8" />
        </linearGradient>
      </defs>
      <path d="M50 0C52 14 60 16 72 28C80 36 86 46 84 56C80 76 62 88 43 88C20 88 1 70 1 48C1 36 4 28 8 22C9 28 11 32 14 34C16 26 20 20 27 18C26 22 28 24 31 25C40 20 50 14 50 0Z" fill="url(#ffA)" />
      <path d="M50 0C52 14 60 16 72 28C80 36 86 46 84 56C82 46 76 40 70 38C70 24 58 14 50 0Z" fill="#ffcf3a" />
      <circle cx="47" cy="50" r="21" fill="url(#ffB)" />
      <path d="M14 34C20 26 34 24 42 32C34 32 28 38 30 46C32 56 42 62 54 60C46 70 26 66 20 52C17 46 15 40 14 34Z" fill="#ff9a1f" />
    </WideSvg>
  );
}

function Photos() {
  const petals = ['#f5b73e', '#c3cf3a', '#72bf5e', '#5ba99f', '#5a9fdc', '#8d82c4', '#b77aa4', '#ec5f56'];
  return (
    <Tile>
      {petals.map((c, i) => (
        <ellipse key={c} cx="39" cy="21" rx="11" ry="17" fill={c} opacity=".85" transform={`rotate(${i * 45} 39 39)`} />
      ))}
    </Tile>
  );
}

function Printer() {
  return (
    <WideSvg width="96" height="90" viewBox="0 0 96 90" $top={-5}>
      <path d="M4 8L50 2L92 14V24L30 32L4 24Z" fill="#dedede" stroke="#8a8a8a" strokeWidth="1" />
      <path d="M10 26L30 24V42L12 44Z" fill="#3a3f46" />
      <path d="M14 28L28 26V38L15 40Z" fill="#6f90a8" />
      <path d="M6 24L30 32V88L8 78Z" fill="#d5d5d5" stroke="#a3a3a3" strokeWidth="1" />
      <path d="M30 32L92 24V72L30 88Z" fill="#efefef" stroke="#a3a3a3" strokeWidth="1" />
      <path d="M26 46L86 36L90 44L32 56Z" fill="#fafafa" stroke="#6e6e6e" strokeWidth="1.500" />
      <path d="M34 58L90 48V52L34 62Z" fill="#8d8d8d" />
      <path d="M32 74L92 60M32 80L92 66" stroke="#b0b0b0" strokeWidth="1" />
      <path d="M44 76L68 70V76L44 82Z" fill="#bdbdbd" />
    </WideSvg>
  );
}

function ZoomApp() {
  return (
    <WideSvg width="86" height="86" viewBox="0 0 86 86" $top={-4}>
      <defs>
        <linearGradient id="zmG" x1="0" y1="0" x2="0" y2="1">
          <stop offset="0" stopColor="#3f8cfb" />
          <stop offset="1" stopColor="#2b70f5" />
        </linearGradient>
      </defs>
      <rect x="1" y="1" width="84" height="84" rx="28" fill="url(#zmG)" />
      <rect x="17" y="28" width="38" height="30" rx="6" fill="#fff" />
      <path d="M59 39L71 28V58L59 48Z" fill="#fff" />
    </WideSvg>
  );
}

function ExcelApp() {
  return (
    <Tile>
      <rect x="20" y="13" width="22" height="17" fill="#21a366" />
      <rect x="42" y="13" width="22" height="17" fill="#33c481" />
      <rect x="20" y="30" width="22" height="19" fill="#107c41" />
      <rect x="42" y="30" width="22" height="19" fill="#21a366" />
      <rect x="20" y="49" width="44" height="15" fill="#185c37" />
      <rect x="7" y="26" width="30" height="31" rx="2" fill="#107c41" />
      <text x="22" y="49" textAnchor="middle" fontFamily="Inter, sans-serif" fontSize="21" fontWeight="600" fill="#fff">X</text>
    </Tile>
  );
}

function FolderStack() {
  return (
    <WideSvg width="84" height="84" viewBox="0 0 84 84" $top={-5}>
      <path d="M1 30V14C1 8 4 5 9 5H18C22 5 24 12 28 12H74C78 12 80 14 80 18L83 30Z" fill="#3a97d8" />
      <path d="M28 14H76V18H28ZM28 20H80V24H28Z" fill="#1d8be0" />
      <rect x="0" y="27" width="84" height="54" rx="5" fill="#4fb7ee" />
      <rect x="1" y="29" width="82" height="46" rx="5" fill="#6ecafa" />
    </WideSvg>
  );
}

function Trash() {
  return (
    <WideSvg width="72" height="92" viewBox="0 0 72 92" $top={-8}>
      <defs>
        <linearGradient id="trG" x1="0" y1="0" x2="0" y2="1">
          <stop offset="0" stopColor="#d6d7d6" />
          <stop offset="1" stopColor="#eeeeee" />
        </linearGradient>
      </defs>
      <path d="M6 18L12 6L22 12L30 2L40 10L50 2L58 10L68 18L36 30Z" fill="#eee" stroke="#777" strokeWidth="1" />
      <path d="M22 14L30 18M36 14L44 20" stroke="#c0392b" strokeWidth="3" />
      <path d="M30 10L42 16" stroke="#2e86de" strokeWidth="3" />
      <path d="M1 16C12 26 60 26 71 16L60 84C50 94 22 94 12 84Z" fill="url(#trG)" />
      <ellipse cx="36" cy="17" rx="35" ry="7" fill="none" stroke="#bbb" strokeWidth="2" />
    </WideSvg>
  );
}

const GlobalStyle = createGlobalStyle`
  html, body {
    margin: 0;
    padding: 0;
    background: #0d2734;
  }
  * {
    box-sizing: border-box;
  }
`;

const Stage = styled.div`
  position: relative;
  width: 2880px;
  height: 1800px;
  overflow: hidden;
  font-family: Inter, "Liberation Sans", sans-serif;
  display: flex;
  flex-direction: column;
  background:
    radial-gradient(ellipse 34px 22px at 2846px 1716px, #dce9f2 0%, #b9d2e2 60%, transparent 100%),
    radial-gradient(ellipse 26px 26px at 2868px 1760px, #e2edf4 0%, #a7c7da 60%, transparent 100%),
    radial-gradient(ellipse 30px 12px at 2822px 1690px, #8fb6cc 0%, transparent 100%),
    radial-gradient(ellipse 36px 10px at 2040px 1798px, #8fc0dc 0%, transparent 100%),
    radial-gradient(ellipse 40px 10px at 1430px 1798px, #8fc0dc 0%, transparent 100%),
    radial-gradient(ellipse 30px 8px at 1160px 1798px, #3a80c0 0%, transparent 100%),
    radial-gradient(ellipse 44px 9px at 2390px 1798px, #7fb0cc 0%, transparent 100%),
    radial-gradient(ellipse 60px 30px at 40px 1720px, #163c4c 0%, transparent 100%),
    radial-gradient(ellipse 50px 20px at 60px 1770px, #143442 0%, transparent 100%),
    #0d2734;
`;

const MenuBar = styled.div`
  height: 48px;
  flex: none;
  background: #45453a;
  display: flex;
  align-items: center;
  padding-bottom: 2px;
  color: #f4f4f0;
  font-size: 25.500px;
  gap: 42px;
`;

const AppleSlot = styled.div`
  width: 66px;
  margin-right: -1px;
  display: flex;
  justify-content: flex-end;
  position: relative;
  top: -2px;
  margin-left: 0;
`;

const AppName = styled.div`
  font-weight: 700;
  margin-left: -1px;
`;

const MenuItem = styled.div`
  font-weight: 400;
`;

const StatusIcons = styled.div`
  margin-left: auto;
  padding-right: 38px;
  display: flex;
  align-items: center;
`;

const Slot = styled.div`
  width: ${p => p.$w}px;
  display: flex;
  justify-content: center;
`;

const Clock = styled.div`
  margin-left: ${p => p.$ml || 13}px;
  white-space: nowrap;
`;

const Desktop = styled.div`
  margin-top: 2px;
  height: 1610px;
  flex: none;
  display: flex;
`;

const WordWindow = styled.div`
  position: relative;
  z-index: 2;
  width: 2794px;
  flex: none;
  display: flex;
  flex-direction: column;
  border-radius: 20px 20px 20px 20px;
  overflow: hidden;
  box-shadow: 0 0 18px rgba(0, 0, 0, 0.22);
`;

const TitleBar = styled.div`
  height: 64px;
  flex: none;
  background: #1a59be;
  border-top: 1px solid #3d74cf;
  padding-bottom: 2px;
  display: grid;
  grid-template-columns: 1fr auto 1fr;
  align-items: center;
`;

const TitleLeft = styled.div`
  display: flex;
  align-items: center;
  padding-left: 25px;
`;

const Lights = styled.div`
  display: flex;
  gap: 14px;
`;

const Light = styled.div`
  width: 26px;
  height: 26px;
  border-radius: 50%;
  background: ${p => (p.$dot ? 'radial-gradient(circle, #2a4a80 0 4px, #5f87c6 5px)' : '#5f87c6')};
  border: 1.500px solid #3f68ab;
`;

const AutoSave = styled.div`
  margin-left: 54px;
  color: #e4ecf8;
  font-size: 22px;
  font-weight: 500;
  white-space: nowrap;
`;

const Toggle = styled.div`
  position: relative;
  margin-left: 13px;
  width: 58px;
  height: 28px;
  border-radius: 14px;
  background: #1b3f66;
  display: flex;
  align-items: center;
`;

const Knob = styled.div`
  width: 24px;
  height: 26px;
  margin-left: 1px;
  border-radius: 50%;
  background: #fff;
`;

const ToggleText = styled.span`
  margin-left: 6px;
  color: #dfe8f5;
  font-size: 17px;
`;

const QuickRow = styled.div`
  display: flex;
  align-items: center;
  margin-left: 26px;
  & > svg:nth-child(2) { margin-left: 25px; }
  & > svg:nth-child(3) { margin-left: 28px; }
  & > svg:nth-child(4) { margin-left: 18px; }
  & > svg:nth-child(5) { margin-left: 20px; }
  & > svg:nth-child(6) { margin-left: 21px; }
  & > svg:nth-child(7) { margin-left: 26px; }
`;

const DocTitle = styled.div`
  color: #e8effa;
  font-size: 26px;
  font-weight: 700;
`;

const TitleRight = styled.div`
  display: flex;
  justify-content: flex-end;
  align-items: center;
  gap: 37px;
  padding-right: 24px;
`;

const TabRow = styled.div`
  height: 58px;
  flex: none;
  background: linear-gradient(#f7f7f7, #f4f4f4);
  display: flex;
  align-items: center;
  padding: 0 21px 0 23px;
`;

const Tabs = styled.div`
  display: flex;
  align-items: center;
  gap: 51px;
  position: relative;
  height: 100%;
`;

const Tab = styled.div`
  position: relative;
  font-size: 26px;
  font-weight: ${p => (p.$active ? 600 : 400)};
  color: #232323;
  line-height: 58px;
  &::after {
    content: '';
    display: ${p => (p.$active ? 'block' : 'none')};
    position: absolute;
    left: 0;
    right: -2px;
    bottom: 2px;
    height: 6px;
    border-radius: 3px;
    background: #2256a8;
  }
`;

const BulbSvg = styled.svg`
  margin-left: -13px;
`;

const Ask = styled.div`
  margin-left: -32px;
  font-size: 26px;
  color: #232323;
`;

const TabActions = styled.div`
  margin-left: auto;
  display: flex;
  gap: 21px;
  margin-top: 8px;
`;

const ActionButton = styled.div`
  width: ${p => p.$w}px;
  height: 47px;
  border: 2px solid #d6d6d6;
  border-radius: 7px;
  background: #fff;
  color: #1f5bb0;
  font-size: 24.500px;
  font-weight: 600;
  display: flex;
  align-items: center;
  justify-content: center;
  gap: 8px;
`;

const Ribbon = styled.div`
  height: 150px;
  flex: none;
  display: flex;
  padding-top: 10px;
  background: linear-gradient(#f4f4f4, #ececec);
  border-bottom: 3px solid #cfcfcf;
`;

const Group = styled.div`
  width: ${p => p.$w}px;
  flex: none;
  height: 124px;
  display: flex;
  padding-left: ${p => p.$pl}px;
  border-right: 3px solid #d2d2d2;
`;

const RibbonItem = styled.div`
  width: ${p => p.$w}px;
  flex: none;
  display: flex;
  flex-direction: column;
  align-items: center;
  font-size: 21.200px;
  line-height: 24px;
  white-space: nowrap;
  color: ${p => (p.$off ? '#8a8a8a' : '#1a1a1a')};
`;

const IconSlot = styled.div`
  height: 60px;
  flex: none;
  margin-top: 10px;
  margin-bottom: 9px;
  display: flex;
  align-items: flex-start;
  padding-left: ${p => p.$pad || 0}px;
`;

const CaretSvg = styled.svg`
  margin: 24px 0 0 ${p => p.$ml}px;
`;

const PreviewStack = styled.div`
  display: flex;
  flex-direction: column;
  align-items: center;
  padding-top: 8px;
`;

const PreviewAbc = styled.div`
  margin-top: 4px;
  font-size: 21px;
  line-height: 22px;
  color: #a8a8a8;
`;

const NavBlock = styled.div`
  margin-left: 10px;
  padding-top: 10px;
  display: flex;
  flex-direction: column;
`;

const NavRow = styled.div`
  display: flex;
  align-items: center;
`;

const NavSvg = styled.svg`
  margin-left: ${p => p.$ml}px;
  transform: ${p => (p.$flip ? 'scaleX(-1)' : 'none')};
`;

const RecordInput = styled.input`
  width: 119px;
  height: 47px;
  margin-left: 16px;
  border: 2px solid #d4d4d4;
  border-radius: 7px;
  background: #fff;
  font: 400 25px Inter, sans-serif;
  color: #1a1a1a;
  padding: 0 0 0 12px;
  outline: none;
`;

const FindRow = styled.div`
  margin-top: 24px;
  display: flex;
  align-items: center;
  gap: 12px;
`;

const FindLabel = styled.div`
  font-size: 21.200px;
  color: #1a1a1a;
  white-space: nowrap;
`;

const RangeBlock = styled.div`
  padding-top: 11px;
  display: flex;
  flex-direction: column;
  gap: 17px;
`;

const RangeRow = styled.div`
  display: flex;
  align-items: center;
`;

const RangeLabel = styled.div`
  margin-left: 8px;
  width: 266px;
  font-size: 21.200px;
  color: #1a1a1a;
  white-space: nowrap;
`;

const RangeSelect = styled.div`
  width: 199px;
  height: 46px;
  display: flex;
  align-items: center;
  justify-content: space-between;
  padding: 0 5px 0 7px;
  font-size: 21.200px;
  color: #1a1a1a;
  background: #f6f6f6;
  border: 2px solid #d8d8d8;
  border-radius: 7px;
`;

const UpDownSvg = styled.svg`
  flex: none;
`;

const RangeInput = styled.input`
  width: ${p => p.$w}px;
  height: 47px;
  border: 2px solid #d4d4d4;
  border-radius: 7px;
  background: #fff;
  outline: none;
`;

const RangeTo = styled.div`
  width: 41px;
  text-align: center;
  font-size: 21.200px;
  color: #1a1a1a;
`;

const MergeButton = styled.div`
  margin: 2px 0 0 24px;
  width: 96px;
  height: 72px;
  flex: none;
  display: flex;
  align-items: flex-start;
  padding: 8px 0 0 3px;
  border-radius: 7px;
  background: linear-gradient(#b9b9b9, #adadad);
`;

const Notice = styled.div`
  height: 63px;
  flex: none;
  display: flex;
  align-items: center;
  padding: 6px 0 0 17px;
  background: #fdf4e0;
  border-bottom: 3px solid #c9c6b8;
`;

const NoticeTitle = styled.div`
  margin-left: 18px;
  font-size: 24px;
  font-weight: 600;
  color: #222;
`;

const NoticeText = styled.div`
  margin-left: 17px;
  font-size: 23.800px;
  color: #222;
`;

const Page = styled.div`
  flex: 1;
  background: linear-gradient(#fff calc(100% - 14px), #fafafa calc(100% - 14px));
`;

const StatusBar = styled.div`
  height: 46px;
  flex: none;
  display: flex;
  align-items: center;
  padding-left: 49px;
  padding-right: 49px;
  border-top: 2px solid #a6a6a6;
  background: linear-gradient(#dfdfdf, #c6c6c6);
`;

const StatusText = styled.div`
  margin-left: ${p => p.$ml || 0}px;
  font-size: 24px;
  color: #4c4c4c;
  white-space: nowrap;
`;

const StatusRight = styled.div`
  margin-left: auto;
  height: 100%;
  display: flex;
  align-items: center;
`;

const ViewSvg = styled.svg`
  margin-left: ${p => p.$ml}px;
  flex: none;
`;

const WebCell = styled.div`
  margin-left: 23px;
  width: 72px;
  height: 100%;
  display: flex;
  align-items: center;
  justify-content: center;
  background: #a2a2a2;
`;

const ZoomSign = styled.div`
  margin-left: ${p => p.$ml}px;
  display: flex;
`;

const Slider = styled.div`
  position: relative;
  margin-left: 14px;
  width: 200px;
  height: 8px;
  border-radius: 4px;
  background: #959595;
`;

const SliderKnob = styled.div`
  position: absolute;
  left: 84px;
  top: -12px;
  width: 32px;
  height: 32px;
  border-radius: 50%;
  background: linear-gradient(#f0f0f0, #e2e2e2);
  box-shadow: 0 1px 2px rgba(0, 0, 0, 0.35);
`;

const SideWindow = styled.div`
  flex: 1;
  margin-right: 2px;
  margin-bottom: 2px;
  display: flex;
  flex-direction: column;
  border-radius: 0 20px 20px 0;
  overflow: hidden;
  background: #fff;
`;

const SideTop = styled.div`
  height: 85px;
  flex: none;
  display: flex;
  align-items: center;
  justify-content: center;
  padding: 20px 0 0 4px;
  background: linear-gradient(90deg, #c8c8c8, #dedede 30%);
`;

const SideBody = styled.div`
  flex: 1;
  display: flex;
  flex-direction: column;
  align-items: center;
  background: linear-gradient(90deg, #dcdcdc, #f6f6f6 34%, #f6f6f6);
  border-bottom: 2px solid #d4d4d4;
`;

const SideDots = styled.div`
  margin: 24px 0 0 4px;
  display: flex;
  flex-direction: column;
  gap: 4px;
  i {
    display: block;
    width: 7px;
    height: 7px;
    border-radius: 50%;
    background: #a8a8a8;
  }
`;

const SideLabel = styled.div`
  align-self: flex-start;
  margin: 33px 0 0 -46px;
  font-size: 25px;
  color: #888;
`;

const Dock = styled.div`
  position: relative;
  z-index: 3;
  margin: 5px 0 0 87px;
  width: 2706px;
  height: 124px;
  flex: none;
  display: flex;
  align-items: flex-start;
  padding: 16px 0 0 5px;
  background: #56717c;
  border: 2px solid #6f8791;
  border-radius: 36px;
`;

const DockSlot = styled.div`
  position: relative;
  width: 104px;
  margin-left: ${p => p.$ml || 0}px;
  flex: none;
  display: flex;
  flex-direction: column;
  align-items: center;
  height: 78px;
  &::after {
    content: '';
    display: ${p => (p.$on ? 'block' : 'none')};
    position: absolute;
    top: 95px;
    width: 8px;
    height: 8px;
    border-radius: 50%;
    background: #050505;
  }
`;

const DockSep = styled.div`
  width: 2px;
  height: 94px;
  flex: none;
  margin: 0 ${p => p.$r}px 0 ${p => p.$l}px;
  background: #1d4250;
`;

const Badge = styled.div`
  position: absolute;
  top: -12px;
  left: 66px;
  width: 44px;
  height: 44px;
  border-radius: 50%;
  background: #ee4438;
  color: #fff;
  font-size: 20px;
  display: flex;
  align-items: center;
  justify-content: center;
`;

const WideSvg = styled.svg`
  flex: none;
  margin-top: ${p => p.$top}px;
`;

const Popup = styled.div`
  position: absolute;
  z-index: 5;
  left: 2324px;
  top: 255px;
  width: 556px;
  height: 161px;
  padding-top: 8px;
  background: #ebebeb;
  border-radius: 12px 0 0 12px;
  box-shadow: 0 0 2px rgba(0, 0, 0, 0.35), 0 4px 18px rgba(0, 0, 0, 0.22);
`;

const PopupRow = styled.div`
  height: 48px;
  display: flex;
  align-items: center;
  gap: 8px;
  padding-left: 40px;
  font-size: 27.500px;
  color: ${p => (p.$off ? '#b4b4b4' : '#262626')};
  white-space: nowrap;
`;
